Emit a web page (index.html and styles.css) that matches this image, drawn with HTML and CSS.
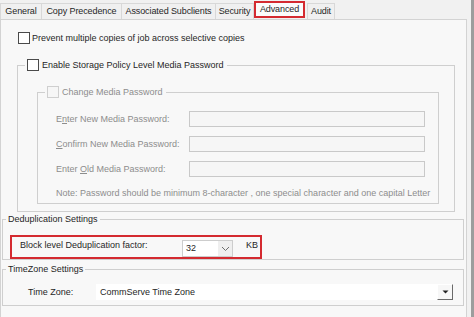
FILE: index.html
```html
<!DOCTYPE html>
<html>
<head>
<meta charset="utf-8">
<link rel="stylesheet" href="styles.css">
</head>
<body>
<div class="window">
  <div class="main">
    <div class="tabs">
      <div class="tab t-general">General</div>
      <div class="tab t-copy">Copy Precedence</div>
      <div class="tab t-assoc">Associated Subclients</div>
      <div class="tab t-security">Security</div>
      <div class="tab t-advanced active">Advanced</div>
      <div class="tab t-audit">Audit</div>
    </div>
    <div class="panel">
      <div class="check-row">
        <span class="box"></span>
        <span>Prevent multiple copies of job across selective copies</span>
      </div>

      <fieldset class="group outer">
        <legend class="legend-check">
          <span class="box"></span>
          <span>Enable Storage Policy Level Media Password</span>
        </legend>

        <fieldset class="group inner">
          <legend class="legend-check disabled">
            <span class="box box-disabled"></span>
            <span>Change Media Password</span>
          </legend>
          <div class="form">
            <div class="field-row">
              <span class="label">E<u>n</u>ter New Media Password:</span>
              <span class="textbox"></span>
            </div>
            <div class="field-row">
              <span class="label"><u>C</u>onfirm New Media Password:</span>
              <span class="textbox"></span>
            </div>
            <div class="field-row">
              <span class="label">Enter <u>O</u>ld Media Password:</span>
              <span class="textbox"></span>
            </div>
            <div class="note">Note: Password should be minimum 8-character , one special character and one capital Letter</div>
          </div>
        </fieldset>
      </fieldset>

      <fieldset class="group wide dedup">
        <legend class="legend-text">Deduplication Settings</legend>
        <div class="dedup-body">
          <div class="highlight">
            <span class="dedup-label">Block level Deduplication factor:</span>
            <span class="combo">
              <span class="combo-value">32</span>
              <span class="combo-btn">
                <svg width="9" height="6" viewBox="0 0 9 6"><path d="M1 1 L4.5 4.5 L8 1" fill="none" stroke="#6f6f6f" stroke-width="1"/></svg>
              </span>
            </span>
            <span class="unit">KB</span>
          </div>
        </div>
      </fieldset>

      <fieldset class="group wide tz">
        <legend class="legend-text">TimeZone Settings</legend>
        <div class="tz-row">
          <span class="tz-label">Time Zone:</span>
          <span class="tz-combo">
            <span class="tz-value">CommServe Time Zone</span>
            <span class="tz-btn">
              <svg width="7" height="4" viewBox="0 0 7 4"><path d="M0.5 0.5 L6.5 0.5 L3.5 3.5 Z" fill="#222"/></svg>
            </span>
          </span>
        </div>
      </fieldset>
    </div>
  </div>
  <div class="edge"></div>
</div>
</body>
</html>
```

FILE: styles.css
```css
* { box-sizing: border-box; }

html, body {
  margin: 0;
  padding: 0;
}

body {
  width: 474px;
  height: 317px;
  overflow: hidden;
  background: #f1f1f1;
  font-family: "Liberation Sans", Arial, sans-serif;
  font-size: 9px;
  color: #262626;
}

.window {
  display: flex;
  height: 317px;
}

.main {
  width: 471px;
  display: flex;
  flex-direction: column;
}

.edge {
  width: 3px;
  background: #9d9d9d;
}

/* Tabs */
.tabs {
  display: flex;
  align-items: flex-end;
  height: 19px;
}

.tab {
  height: 16px;
  line-height: 15px;
  border: 1px solid #d8d8d8;
  border-bottom: none;
  margin-right: -1px;
  background: #f0f0f0;
  white-space: nowrap;
  text-align: center;
  letter-spacing: -0.1px;
}

.t-general { width: 42px; }
.t-copy { width: 81px; }
.t-assoc { width: 95px; }
.t-security { width: 39px; }
.t-audit { width: 28px; }

.tab.active {
  width: 51px;
  height: 17px;
  line-height: 13px;
  margin: 0 0 1px 1px;
  border: 2px solid #d42a30;
  background: #fbfbfb;
}

.tab.active + .tab {
  margin-left: 2px;
}

/* Panel */
.panel {
  flex: 1;
  margin-right: 4px;
  border: 1px solid #d3d3d3;
  border-bottom: none;
  background: #f8f8f8;
  padding: 0 2px 0 1px;
}

.check-row {
  display: flex;
  align-items: center;
  gap: 2px;
  height: 14px;
  margin: 11px 0 0 16px;
}

.box {
  width: 12px;
  height: 12px;
  border: 1px solid #4a4a4a;
  background: #fff;
  flex: none;
}

.box-disabled {
  border-color: #cfcfcf;
  background: #f6f6f6;
}

/* Group boxes */
.group {
  border: 1px solid #cfcfcf;
  margin: 0;
  padding: 0;
  min-width: 0;
}

.legend-check {
  display: flex;
  align-items: center;
  gap: 3px;
  height: 14px;
  padding: 0 3px 0 2px;
  margin-left: 7px;
}

.legend-check.disabled {
  color: #8d8d8d;
}

.legend-text {
  height: 12px;
  line-height: 12px;
  padding: 0 2px;
  margin-left: 3px;
}

.outer {
  margin: 13px 9px 0 15px;
  padding-bottom: 7px;
}

.inner {
  margin: 13px 15px 0 19px;
}

.form {
  display: flex;
  flex-direction: column;
  gap: 9px;
  padding: 12px 13px 3px 18px;
  color: #8d8d8d;
}

.field-row {
  display: grid;
  grid-template-columns: 133px 1fr;
  align-items: center;
  height: 16px;
}

.textbox {
  height: 16px;
  border: 1px solid #c9c9c9;
  background: #f6f6f6;
}

.note {
  line-height: 14px;
  white-space: nowrap;
}

/* Deduplication */
.wide {
  margin: 0;
}

.dedup {
  margin-top: 1px;
}

.dedup-body {
  padding: 10px 0 0 7px;
}

.highlight {
  display: flex;
  align-items: flex-start;
  width: 252px;
  height: 24px;
  border: 2px solid #d42a30;
  padding-left: 8px;
}

.dedup-label {
  width: 162px;
  line-height: 12px;
  margin-top: 2px;
}

.combo {
  display: flex;
  width: 51px;
  height: 17px;
  margin-top: 3px;
  border: 1px solid #cdcdcd;
  background: #fff;
}

.combo-value {
  flex: 1;
  padding-left: 3px;
  line-height: 15px;
}

.combo-btn {
  width: 14px;
  display: flex;
  align-items: center;
  justify-content: center;
  background: #efefef;
}

.unit {
  margin: 2px 0 0 13px;
  line-height: 12px;
}

/* Time zone */
.tz {
  margin-top: 3px;
}

.tz-row {
  display: flex;
  align-items: center;
  height: 16px;
  margin: 9px 10px 5px 25px;
}

.tz-label {
  width: 68px;
}

.tz-combo {
  flex: 1;
  display: flex;
  height: 16px;
  background: #fff;
}

.tz-value {
  flex: 1;
  padding-left: 4px;
  line-height: 16px;
}

.tz-btn {
  width: 16px;
  height: 16px;
  display: flex;
  align-items: center;
  justify-content: center;
  background: #f7f7f7;
  border-right: 1px solid #6a6a6a;
  border-bottom: 1px solid #6a6a6a;
  border-left: 1px solid #fff;
  border-top: 1px solid #fff;
}
```
